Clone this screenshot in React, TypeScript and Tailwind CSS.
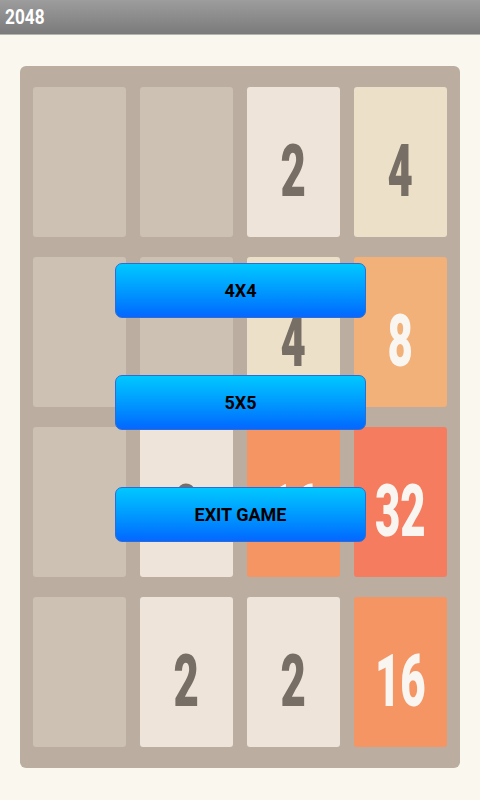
import React from 'react';

type Cell = number | null;

const board: Cell[][] = [
  [null, null, 2, 4],
  [null, null, 4, 8],
  [null, 2, 16, 32],
  [null, 2, 2, 16],
];

const tileStyles: Record<number, string> = {
  2: 'bg-[#eee4da] text-[#776e65]',
  4: 'bg-[#ede0c8] text-[#776e65]',
  8: 'bg-[#f2b179] text-[#f9f6f2]',
  16: 'bg-[#f59563] text-[#f9f6f2]',
  32: 'bg-[#f67c5f] text-[#f9f6f2]',
};

function Tile({ value }: { value: Cell }) {
  if (value === null) {
    return <div className="h-[150px] rounded-[3px] bg-[#cdc1b4]" />;
  }
  return (
    <div
      className={`h-[150px] rounded-[3px] flex items-center justify-center pt-[18px] ${tileStyles[value]}`}
    >
      <span className="font-['Roboto',sans-serif] font-black text-[73px] leading-none scale-x-[0.6]">
        {value}
      </span>
    </div>
  );
}

function MenuButton({ label }: { label: string }) {
  return (
    <button className="h-[55px] w-[251px] rounded-[7px] border border-[#2a6fd8] bg-linear-to-b from-[#00c8ff] to-[#0a66ff] font-['Roboto',sans-serif] font-bold text-[18px] text-black">
      {label}
    </button>
  );
}

export default function App() {
  return (
    <div className="w-[480px] h-[800px] bg-[#faf7ef] flex flex-col">
      {/* Title bar */}
      <div className="h-[35px] shrink-0 bg-linear-to-b from-[#9d9d9d] to-[#7b7b7b] border-b border-[#b5b5b0] flex items-center px-[5px]">
        <span className="font-['Roboto',sans-serif] font-bold text-[21px] text-white origin-left scale-x-[0.82] leading-none">
          2048
        </span>
      </div>

      {/* Board */}
      <div className="relative mx-[20px] mt-[31px] w-[440px] rounded-[6px] bg-[#bbada0] px-[13px] py-[21px]">
        <div className="grid grid-cols-4 gap-x-[14px] gap-y-[20px]">
          {board.flat().map((v, i) => (
            <Tile key={i} value={v} />
          ))}
        </div>

        {/* Size / exit menu over the board */}
        <div className="absolute left-[95px] top-[197px] flex flex-col gap-[57px]">
          <MenuButton label="4X4" />
          <MenuButton label="5X5" />
          <MenuButton label="EXIT GAME" />
        </div>
      </div>
    </div>
  );
}
